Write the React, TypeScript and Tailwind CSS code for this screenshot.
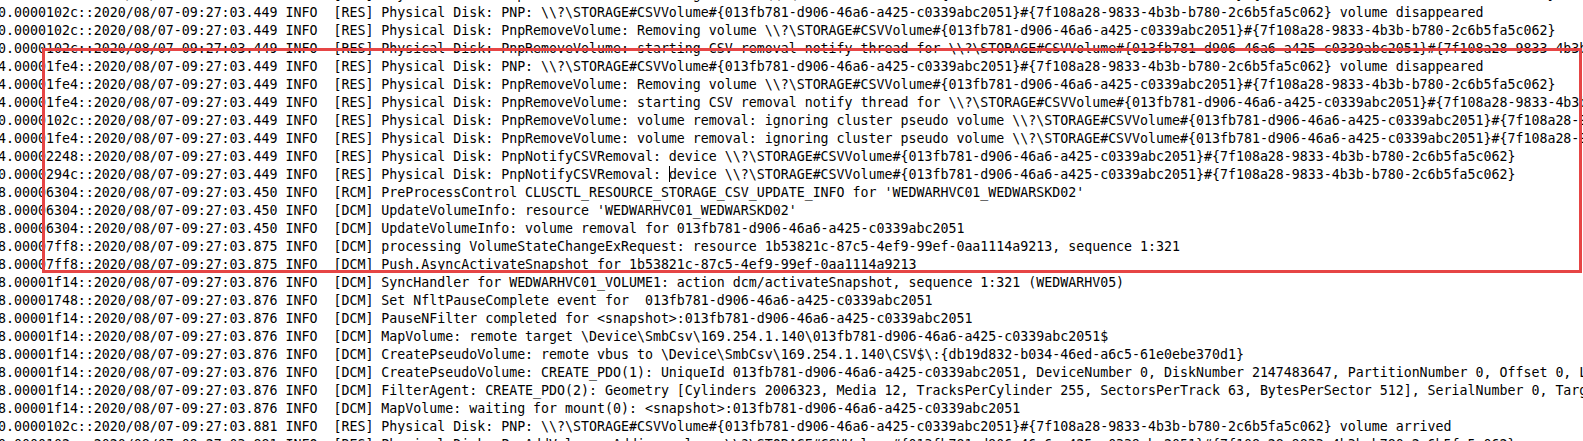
const vol = "\\\\?\\STORAGE#CSVVolume#{013fb781-d906-46a6-a425-c0339abc2051}#{7f108a28-9833-4b3b-b780-2c6b5fa5c062}";
const guid = "013fb781-d906-46a6-a425-c0339abc2051";

const t449 = "2020/08/07-09:27:03.449 INFO  ";
const t450 = "2020/08/07-09:27:03.450 INFO  ";
const t875 = "2020/08/07-09:27:03.875 INFO  ";
const t876 = "2020/08/07-09:27:03.876 INFO  ";
const t881 = "2020/08/07-09:27:03.881 INFO  ";

const lines: string[] = [
  `0.0000102c::${t449}[RES] Physical Disk: PnpRemoveVolume: Removing volume ${vol}`,
  `0.0000102c::${t449}[RES] Physical Disk: PNP: ${vol} volume disappeared`,
  `0.0000102c::${t449}[RES] Physical Disk: PnpRemoveVolume: Removing volume ${vol}`,
  `0.0000102c::${t449}[RES] Physical Disk: PnpRemoveVolume: starting CSV removal notify thread for ${vol}`,
  `4.00001fe4::${t449}[RES] Physical Disk: PNP: ${vol} volume disappeared`,
  `4.00001fe4::${t449}[RES] Physical Disk: PnpRemoveVolume: Removing volume ${vol}`,
  `4.00001fe4::${t449}[RES] Physical Disk: PnpRemoveVolume: starting CSV removal notify thread for ${vol}`,
  `0.0000102c::${t449}[RES] Physical Disk: PnpRemoveVolume: volume removal: ignoring cluster pseudo volume ${vol}`,
  `4.00001fe4::${t449}[RES] Physical Disk: PnpRemoveVolume: volume removal: ignoring cluster pseudo volume ${vol}`,
  `4.00002248::${t449}[RES] Physical Disk: PnpNotifyCSVRemoval: device ${vol}`,
  `0.0000294c::${t449}[RES] Physical Disk: PnpNotifyCSVRemoval: device ${vol}`,
  `8.00006304::${t450}[RCM] PreProcessControl CLUSCTL_RESOURCE_STORAGE_CSV_UPDATE_INFO for 'WEDWARHVC01_WEDWARSKD02'`,
  `8.00006304::${t450}[DCM] UpdateVolumeInfo: resource 'WEDWARHVC01_WEDWARSKD02'`,
  `8.00006304::${t450}[DCM] UpdateVolumeInfo: volume removal for ${guid}`,
  `8.00007ff8::${t875}[DCM] processing VolumeStateChangeExRequest: resource 1b53821c-87c5-4ef9-99ef-0aa1114a9213, sequence 1:321`,
  `8.00007ff8::${t875}[DCM] Push.AsyncActivateSnapshot for 1b53821c-87c5-4ef9-99ef-0aa1114a9213`,
  `8.00001f14::${t876}[DCM] SyncHandler for WEDWARHVC01_VOLUME1: action dcm/activateSnapshot, sequence 1:321 (WEDWARHV05)`,
  `8.00001748::${t876}[DCM] Set NfltPauseComplete event for  ${guid}`,
  `8.00001f14::${t876}[DCM] PauseNFilter completed for <snapshot>:${guid}`,
  `8.00001f14::${t876}[DCM] MapVolume: remote target \\Device\\SmbCsv\\169.254.1.140\\${guid}$`,
  `8.00001f14::${t876}[DCM] CreatePseudoVolume: remote vbus to \\Device\\SmbCsv\\169.254.1.140\\CSV$\\:{db19d832-b034-46ed-a6c5-61e0ebe370d1}`,
  `8.00001f14::${t876}[DCM] CreatePseudoVolume: CREATE_PDO(1): UniqueId ${guid}, DeviceNumber 0, DiskNumber 2147483647, PartitionNumber 0, Offset 0, Length 0`,
  `8.00001f14::${t876}[DCM] FilterAgent: CREATE_PDO(2): Geometry [Cylinders 2006323, Media 12, TracksPerCylinder 255, SectorsPerTrack 63, BytesPerSector 512], SerialNumber 0, TargetId 0`,
  `8.00001f14::${t876}[DCM] MapVolume: waiting for mount(0): <snapshot>:${guid}`,
  `0.0000102c::${t881}[RES] Physical Disk: PNP: ${vol} volume arrived`,
  `0.0000102c::${t881}[RES] Physical Disk: PnpAddVolume: Adding volume ${vol}`,
];

// the text cursor sits before "device" on this row
const CARET_ROW = 10;
const CARET_COL = 84;

function LogLine({ text, caret }: { text: string; caret?: number }) {
  if (caret === undefined) {
    return <div className="h-[18px] leading-[18px]">{text}</div>;
  }
  return (
    <div className="h-[18px] leading-[18px]">
      {text.slice(0, caret)}
      <span className="relative">
        <span className="absolute left-0 top-[-1px] h-[16px] w-px bg-black" />
        {text.slice(caret)}
      </span>
    </div>
  );
}

export default function App() {
  return (
    <div className="relative h-[441px] w-[1583px] overflow-hidden bg-white">
      <div className="ml-[-2px] mt-[-14px] whitespace-pre font-['DejaVu_Sans_Mono',monospace] text-[13.288px] text-black">
        {lines.map((line, i) => (
          <LogLine
            key={i}
            text={line}
            caret={i === CARET_ROW ? CARET_COL : undefined}
          />
        ))}
      </div>
      <div className="absolute left-[42px] top-[48px] h-[225px] w-[1540px] border-[3px] border-[#e64545]" />
    </div>
  );
}
